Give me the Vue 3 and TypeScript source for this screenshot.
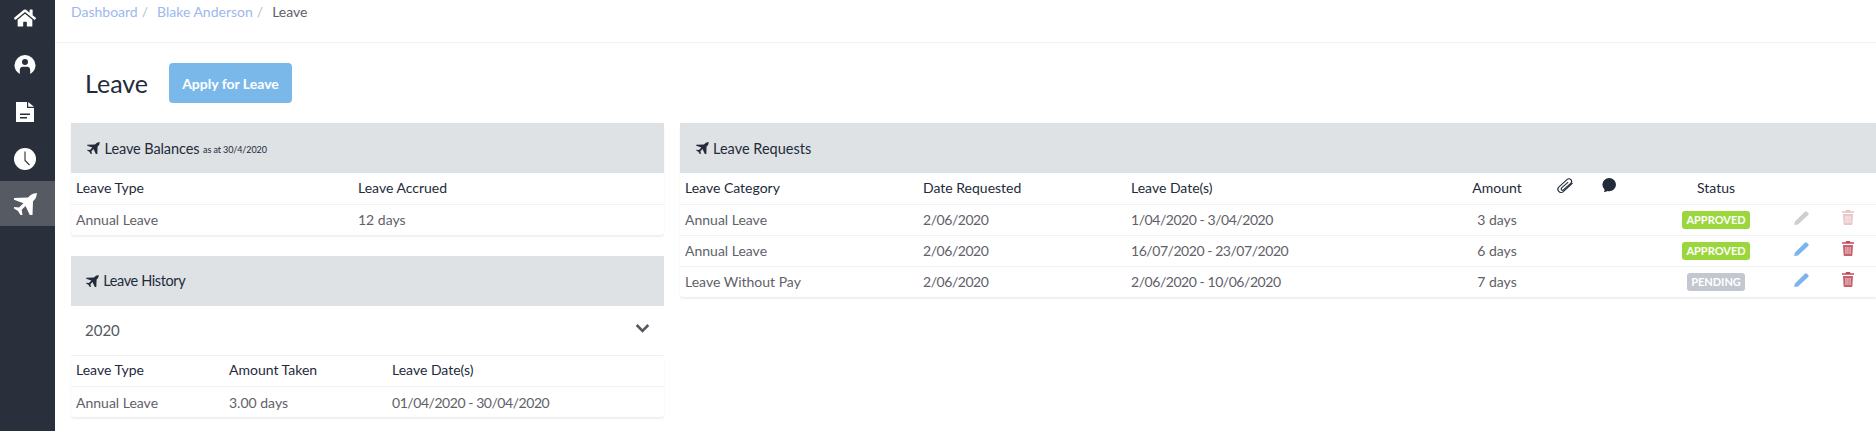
<script setup lang="ts">
interface Req { cat: string; date: string; range: string; amount: string; status: string; dim: boolean }
const requests: Req[] = [
  { cat: 'Annual Leave', date: '2/06/2020', range: '1/04/2020 - 3/04/2020', amount: '3 days', status: 'APPROVED', dim: true },
  { cat: 'Annual Leave', date: '2/06/2020', range: '16/07/2020 - 23/07/2020', amount: '6 days', status: 'APPROVED', dim: false },
  { cat: 'Leave Without Pay', date: '2/06/2020', range: '2/06/2020 - 10/06/2020', amount: '7 days', status: 'PENDING', dim: false },
]
const plane = 'M23 0L22.200 4Q21.600 6.200 19 8.200L18.500 22H15.800L11.500 13L7.700 16.800L8.500 22H6.500L4 18L0 15.500V14L5 14.500L9.500 10.300L0 6.800V5L14 4.500Q17 1.500 19 .8Z'
</script>

<template>
  <div class="app">
    <aside class="side">
      <div class="nav n1">
        <svg viewBox="0 0 576 512" class="i-home"><path fill="#fff" d="M280.37 148.26L96 300.11V464a16 16 0 0 0 16 16l112.06-.29a16 16 0 0 0 15.92-16V368a16 16 0 0 1 16-16h64a16 16 0 0 1 16 16v95.64a16 16 0 0 0 16 16.05L464 480a16 16 0 0 0 16-16V300L295.67 148.26a12.19 12.19 0 0 0-15.3 0zM571.6 251.47L488 182.56V44.05a12 12 0 0 0-12-12h-56a12 12 0 0 0-12 12v72.61L318.47 43a48 48 0 0 0-61 0L4.34 251.47a12 12 0 0 0-1.6 16.9l25.5 31A12 12 0 0 0 45.15 301l235.22-193.74a12.19 12.19 0 0 1 15.3 0L530.9 301a12 12 0 0 0 16.9-1.6l25.5-31a12 12 0 0 0-1.7-16.93z"/></svg>
      </div>
      <div class="nav n2">
        <svg viewBox="0 0 22 20" class="i-user"><path fill="#fff" d="M11 0a10.500 10.500 0 0 1 10.500 10 9.800 9.800 0 0 1-3.400 7.600c-.6.6-1.200 1-1.900 1.300v-3.700c0-2-1.100-3.500-3-3.500H8.800c-1.900 0-3 1.500-3 3.500v3.700c-.7-.3-1.300-.7-1.900-1.300A9.800 9.800 0 0 1 .5 10 10.500 10.500 0 0 1 11 0z"/><circle cx="11" cy="7" r="3" fill="#2a303b"/></svg>
      </div>
      <div class="nav n3">
        <svg viewBox="0 0 18 20" class="i-file"><path fill="#fff" fill-rule="evenodd" d="M0 0h11v6h7v14H0zM4 11.500V13h10v-1.500zM4 15v1.500h7V15zM12.200 0L18 4.800h-5.800z"/></svg>
      </div>
      <div class="nav n4">
        <svg viewBox="0 0 22 22" class="i-clock"><circle cx="11" cy="11" r="11" fill="#fff"/><path d="M11 3.500V12.500l4.500 4.500" fill="none" stroke="#2a303b" stroke-width="1.100"/></svg>
      </div>
      <div class="nav n5 active">
        <svg viewBox="0 0 23 22" class="i-plane"><path fill="#fff" :d="plane"/></svg>
      </div>
    </aside>

    <main class="main">
      <nav class="crumbs">
        <a>Dashboard</a><span class="sep">/</span><a>Blake Anderson</a><span class="sep">/</span><span class="cur">Leave</span>
      </nav>

      <header class="head">
        <h1>Leave</h1>
        <button class="apply" type="button">Apply for Leave</button>
      </header>

      <div class="cols">
        <div class="col">
          <section class="panel">
            <h2 class="ph">
              <svg viewBox="0 0 23 22" class="pi"><path fill="#232b3a" :d="plane"/></svg>
              Leave Balances <small>as at 30/4/2020</small>
            </h2>
            <table class="t bal">
              <colgroup><col class="b1"><col></colgroup>
              <thead><tr><th>Leave Type</th><th>Leave Accrued</th></tr></thead>
              <tbody><tr><td>Annual Leave</td><td>12 days</td></tr></tbody>
            </table>
          </section>

          <section class="history">
            <h2 class="ph hist">
              <svg viewBox="0 0 23 22" class="pi"><path fill="#232b3a" :d="plane"/></svg>
              Leave History
            </h2>
            <div class="year">
              <span>2020</span>
              <svg viewBox="0 0 16 10" class="chev"><path d="M1.800 1.800L8 8l6.200-6.200" fill="none" stroke="#555861" stroke-width="2.800"/></svg>
            </div>
            <div class="panel">
              <table class="t his">
                <colgroup><col class="h1"><col class="h2"><col></colgroup>
                <thead><tr><th>Leave Type</th><th>Amount Taken</th><th>Leave Date(s)</th></tr></thead>
                <tbody><tr><td>Annual Leave</td><td>3.00 days</td><td class="num">01/04/2020 - 30/04/2020</td></tr></tbody>
              </table>
            </div>
          </section>
        </div>

        <section class="panel req">
          <h2 class="ph">
            <svg viewBox="0 0 23 22" class="pi"><path fill="#232b3a" :d="plane"/></svg>
            <span class="rq">Leave Requests</span>
          </h2>
          <table class="t rt">
            <colgroup><col class="r1"><col class="r2"><col class="r3"><col class="r4"><col class="r5"><col class="r6"><col class="r7"><col class="r8"><col></colgroup>
            <thead>
              <tr>
                <th>Leave Category</th><th>Date Requested</th><th>Leave Date(s)</th>
                <th class="c">Amount</th>
                <th class="c">
                  <svg viewBox="0 0 16 16" class="clip"><g transform="translate(8 8) rotate(-42) translate(-9 -3.500)"><path d="M16.500 6.500H4a3.200 3.200 0 0 1 0-6.400h11a2.600 2.600 0 0 1 0 5.200H5.200a1.300 1.300 0 0 1 0-2.600H14" fill="none" stroke="#232b3a" stroke-width="1.100"/></g></svg>
                </th>
                <th class="c">
                  <svg viewBox="0 0 14 14" class="bub"><path fill="#232b3a" d="M7.200 0a6.800 6.600 0 0 1 0 13.200c-.7 0-1.300-.1-1.900-.3-.8.6-2 1.100-3.400 1.100.5-.8.700-1.500.7-2.300A6.500 6.500 0 0 1 .4 6.600 6.800 6.600 0 0 1 7.200 0z"/></svg>
                </th>
                <th class="c st">Status</th><th></th><th></th>
              </tr>
            </thead>
            <tbody>
              <tr v-for="r in requests" :key="r.range">
                <td>{{ r.cat }}</td>
                <td class="num">{{ r.date }}</td>
                <td class="num">{{ r.range }}</td>
                <td class="c">{{ r.amount }}</td>
                <td></td><td></td>
                <td class="c st"><span class="badge" :class="r.status === 'PENDING' ? 'pending' : 'approved'">{{ r.status }}</span></td>
                <td class="c">
                  <svg viewBox="0 0 15 14" class="act"><path :fill="r.dim ? '#cfcfcf' : '#7cb4ee'" d="M0 14L1 10.500 10.800.7a1.600 1.600 0 0 1 2.200 0l1.200 1.200a1.600 1.600 0 0 1 0 2.200L4 13.500z"/></svg>
                </td>
                <td class="c last">
                  <svg viewBox="0 0 12 15" class="trash" :class="{ faint: r.dim }"><path fill="#be4d5c" d="M4 0h4l.5 1.200H12v1.600H0V1.200h3.500z"/><path fill="#c4616d" fill-rule="evenodd" d="M1 4h10l-.6 10a1 1 0 0 1-1 1H2.600a1 1 0 0 1-1-1zM3.600 6v7h.7V6zm2 0v7h.7V6zm2.100 0v7h.7V6z"/></svg>
                </td>
              </tr>
            </tbody>
          </table>
        </section>
      </div>
    </main>
  </div>
</template>

<style>
html, body { margin: 0; background: #fff; overflow: hidden; }
</style>

<style scoped>
.app { display: flex; width: 1876px; height: 431px; overflow: hidden; font-family: Lato, "Open Sans", sans-serif; font-size: 14px; color: #5f6169; }
.side { flex: 0 0 55px; background: #2a303b; display: flex; flex-direction: column; }
.nav { display: flex; align-items: center; justify-content: center; padding-right: 5px; }
.n1 { height: 35px; margin-bottom: 6px; }
.n2 { height: 47px; }
.n3 { height: 48px; }
.n4 { height: 45px; }
.n5 { height: 45px; }
.active { background: #565a62; }
.i-home { width: 22px; height: 20px; }
.i-user { width: 22px; height: 20px; }
.i-file { width: 18px; height: 20px; }
.i-clock { width: 22px; height: 22px; }
.i-plane { width: 23px; height: 22px; }
.main { flex: 1; min-width: 0; }
.crumbs { height: 23px; padding: 0 0 19px 16px; border-bottom: 1px solid #f1f2f3; display: flex; align-items: center; font-size: 14px; }
.crumbs a { color: #9db8ec; }
.sep { color: #b9c0c9; margin: 0 9px 0 4px; }
.cur { color: #5f6169; }
.head { display: flex; align-items: center; padding: 20px 0 20px 30px; height: 40px; }
h1 { margin: 0; font-size: 25px; font-weight: 400; color: #232b3a; width: 84px; }
.apply { width: 123px; height: 40px; border: 0; border-radius: 4px; background: #7ab8ea; color: #fff; font: 700 14px Lato, sans-serif; padding: 0; }
.cols { display: grid; grid-template-columns: 593px 1196px; column-gap: 16px; padding-left: 16px; align-items: start; }
.panel { background: #fff; box-shadow: 0 2px 2px rgba(0,0,0,.06), 0 0 1px rgba(0,0,0,.08); border-radius: 3px; }
.req { border-radius: 3px 0 0 3px; }
.ph { margin: 0; height: 50px; background: #dee2e5; display: flex; align-items: center; padding-left: 16px; font-size: 14.5px; font-weight: 400; color: #232b3a; white-space: pre; letter-spacing: -.1px; }
.ph small { font-size: 9px; margin-top: 2px; }
.pi { width: 13px; height: 12px; margin-right: 1px; }
.rq { margin-left: 3px; letter-spacing: 0; }
.t { width: 100%; border-collapse: collapse; table-layout: fixed; }
.t th { height: 31px; text-align: left; padding: 0 5px 2px; box-sizing: border-box; font-weight: 400; color: #232b3a; border-bottom: 1px solid #f1f2f3; font-size: 14px; }
.t td { height: 30px; padding: 0 5px; border-bottom: 1px solid #f1f2f3; font-size: 14px; }
.t tr:last-child td { border-bottom: 0; }
.t .c { text-align: center; padding: 0; }
.t th.c { padding-bottom: 2px; }
.t .st { padding-left: 20px; }
.t .last { padding-right: 4px; }
.t .num { letter-spacing: -.45px; }
.b1 { width: 282px; }
.h1 { width: 153px; }
.h2 { width: 163px; }
.r1 { width: 238px; }
.r2 { width: 208px; }
.r3 { width: 323px; }
.r4 { width: 96px; }
.r5 { width: 40px; }
.r6 { width: 48px; }
.r7 { width: 146px; }
.r8 { width: 44px; }
.history { margin-top: 21px; }
.hist { padding-left: 15px; letter-spacing: -.4px; }
.year { height: 50px; display: flex; justify-content: space-between; align-items: center; padding: 0 14px 0 14px; color: #55585f; font-size: 15px; border-bottom: 1px solid #f1f2f3; box-sizing: border-box; }
.chev { width: 15px; height: 10px; margin-top: -5px; }
.clip { width: 16px; height: 16px; vertical-align: middle; margin-bottom: 3px; }
.bub { width: 14px; height: 14px; vertical-align: middle; margin-bottom: 5px; }
.badge { display: inline-block; height: 18px; line-height: 18px; padding: 0 4px; border-radius: 3px; color: #fff; font-size: 11px; font-weight: 700; vertical-align: middle; }
.approved { background: #9bd63c; }
.pending { background: #c3c7d0; }
.act { width: 15px; height: 14px; vertical-align: middle; margin-bottom: 4px; }
.trash { width: 12px; height: 15px; vertical-align: middle; margin-bottom: 4px; }
.faint { opacity: .35; }
</style>
